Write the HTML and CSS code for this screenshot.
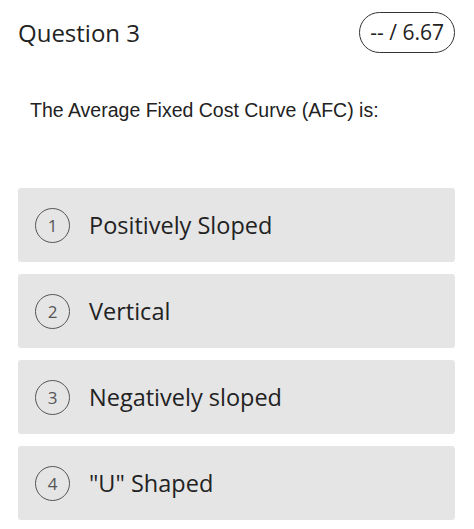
FILE: index.html
```html
<!DOCTYPE html>
<html lang="en">
<head>
  <meta charset="UTF-8">
  <title>Question 3</title>
  <link rel="stylesheet" href="styles.css">
</head>
<body>
  <div class="quiz">
    <!-- Kopfzeile -->
    <div class="quiz-header">
      <h2 class="quiz-title">Question 3</h2>
      <div class="points">-- / 6.67</div>
    </div>

    <p class="prompt">The Average Fixed Cost Curve (AFC) is:</p>

    <!-- Antworten -->
    <div class="options">
      <div class="option"><span class="num">1</span><span class="label">Positively Sloped</span></div>
      <div class="option"><span class="num">2</span><span class="label">Vertical</span></div>
      <div class="option"><span class="num">3</span><span class="label">Negatively sloped</span></div>
      <div class="option"><span class="num">4</span><span class="label">"U" Shaped</span></div>
    </div>
  </div>
</body>
</html>
```
FILE: styles.css
```css
body {
  margin: 0;
  background-color: white;
  color: #222;
  font-family: "Open Sans", sans-serif;
  overflow: hidden;
}

.quiz {
  padding: 12px 19px 0 18px;
}

.quiz-header {
  display: flex;
  justify-content: space-between;
  align-items: center;
}

.quiz-title {
  margin: 0;
  font-size: 24px;
  font-weight: 400;
  color: #222;
}

.points {
  height: 39px;
  padding: 0 10px;
  border: 1.5px solid #333;
  border-radius: 22px;
  font-size: 21px;
  line-height: 39px;
  color: #222;
}

.prompt {
  margin: 46px 0 0 12px;
  font-family: "Liberation Sans", Arial, sans-serif;
  font-size: 19.5px;
  color: #222;
}

.options {
  display: flex;
  flex-direction: column;
  gap: 12px;
  margin-top: 66px;
}

.option {
  display: flex;
  align-items: center;
  height: 74px;
  padding-left: 17px;
  background-color: #e5e5e5;
  border-radius: 3px;
}

.num {
  display: flex;
  align-items: center;
  justify-content: center;
  width: 33px;
  height: 33px;
  border: 1.5px solid #555;
  border-radius: 50%;
  font-size: 17px;
  color: #555;
}

.label {
  margin-left: 19px;
  font-size: 23.5px;
  color: #222;
}
```
